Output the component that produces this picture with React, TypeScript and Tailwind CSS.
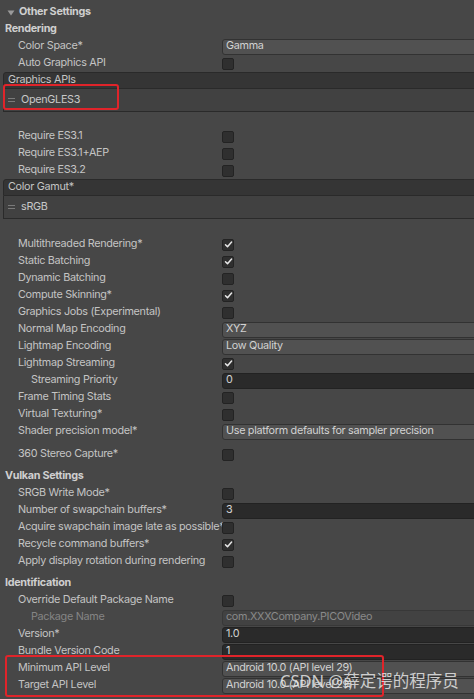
import React from "react";

const font = { fontFamily: "Inter, 'Noto Sans', sans-serif" };
const T = "text-[10.8px] tracking-[-0.3px]";

function Check({ on }: { on?: boolean }) {
  return (
    <div className="w-[12px] h-[12px] rounded-[2px] bg-[#2f2f2f] border border-[#232323] flex items-center justify-center">
      {on && (
        <svg width="9" height="9" viewBox="0 0 9 9">
          <path d="M1.5 4.8 L3.5 6.8 L7.6 2" stroke="#e8e8e8" strokeWidth="1.5" fill="none" strokeLinecap="round" strokeLinejoin="round" />
        </svg>
      )}
    </div>
  );
}

function Drop({ text }: { text: string }) {
  return (
    <div className={"h-[16px] w-[260px] bg-[#515151] border border-[#323232] rounded-[3px] pl-[3px] flex items-center text-[#d2d2d2] whitespace-nowrap overflow-hidden " + T}>
      {text}
    </div>
  );
}

function TextF({ text, disabled }: { text: string; disabled?: boolean }) {
  return (
    <div
      className={
        (disabled
          ? "h-[16px] w-[260px] bg-[#424242] border border-[#383838] rounded-[3px] pl-[3px] flex items-center text-[#8a8a8a] whitespace-nowrap overflow-hidden "
          : "h-[16px] w-[260px] bg-[#2a2a2a] border border-[#222222] rounded-[3px] pl-[3px] flex items-center text-[#d2d2d2] whitespace-nowrap overflow-hidden ") + T
      }
    >
      {text}
    </div>
  );
}

function Row({
  label,
  indent,
  dim,
  children,
  className,
}: {
  label: string;
  indent?: boolean;
  dim?: boolean;
  children?: React.ReactNode;
  className?: string;
}) {
  return (
    <div className={"h-[17px] flex items-center " + (className ?? "")}>
      <div
        className={
          "w-[222px] shrink-0 whitespace-nowrap " +
          T +
          " " +
          (indent ? "pl-[31px] " : "pl-[18px] ") +
          (dim ? "text-[#858585]" : "text-[#c4c4c4]")
        }
      >
        {label}
      </div>
      <div className="flex items-center">{children}</div>
    </div>
  );
}

function Header({ text, className }: { text: string; className?: string }) {
  return (
    <div className={"h-[17px] flex items-center pl-[5px] font-bold text-[#cfcfcf] " + T + " " + (className ?? "")}>
      {text}
    </div>
  );
}

function ListBox({ title, item }: { title: string; item: string }) {
  return (
    <div className="ml-[3px] w-[480px]">
      <div className={"h-[17px] bg-[#353535] border border-[#2a2a2a] rounded-tl-[3px] flex items-center pl-[4px] text-[#c4c4c4] " + T}>
        {title}
      </div>
      <div className={"h-[23px] bg-[#414141] border border-t-0 border-[#2a2a2a] flex items-center pl-[4px] text-[#c8c8c8] " + T}>
        <div className="flex flex-col gap-[2px] mr-[6px]">
          <div className="w-[7px] h-[1px] bg-[#7a7a7a]" />
          <div className="w-[7px] h-[1px] bg-[#7a7a7a]" />
        </div>
        {item}
      </div>
    </div>
  );
}

export default function App() {
  return (
    <div className="relative w-[474px] h-[699px] bg-[#474747] overflow-hidden" style={font}>
      <div className="flex flex-col pt-[4px]">
        <div className={"h-[17px] flex items-center pl-[7px] font-bold text-[#cfcfcf] " + T}>
          <svg width="8" height="8" viewBox="0 0 8 8" className="mr-[4px]">
            <path d="M0.5 1.5 L7.5 1.5 L4 6.5 Z" fill="#9a9a9a" />
          </svg>
          Other Settings
        </div>
        <Header text="Rendering" />
        <Row label="Color Space*">
          <Drop text="Gamma" />
        </Row>
        <Row label="Auto Graphics API">
          <Check />
        </Row>
        <ListBox title="Graphics APIs" item="OpenGLES3" />
        <div className="mt-[16px]">
          <Row label="Require ES3.1">
            <Check />
          </Row>
          <Row label="Require ES3.1+AEP">
            <Check />
          </Row>
          <Row label="Require ES3.2">
            <Check />
          </Row>
        </div>
        <div className="mt-[0px]">
          <ListBox title="Color Gamut*" item="sRGB" />
        </div>
        <div className="mt-[17px]">
          <Row label="Multithreaded Rendering*">
            <Check on />
          </Row>
          <Row label="Static Batching">
            <Check on />
          </Row>
          <Row label="Dynamic Batching">
            <Check />
          </Row>
          <Row label="Compute Skinning*">
            <Check on />
          </Row>
          <Row label="Graphics Jobs (Experimental)">
            <Check />
          </Row>
          <Row label="Normal Map Encoding">
            <Drop text="XYZ" />
          </Row>
          <Row label="Lightmap Encoding">
            <Drop text="Low Quality" />
          </Row>
          <Row label="Lightmap Streaming">
            <Check on />
          </Row>
          <Row label="Streaming Priority" indent>
            <TextF text="0" />
          </Row>
          <Row label="Frame Timing Stats">
            <Check />
          </Row>
          <Row label="Virtual Texturing*">
            <Check />
          </Row>
          <Row label="Shader precision model*">
            <Drop text="Use platform defaults for sampler precision" />
          </Row>
          <Row label="360 Stereo Capture*" className="mt-[6px]">
            <Check />
          </Row>
        </div>
        <Header text="Vulkan Settings" className="mt-[5px]" />
        <Row label="SRGB Write Mode*">
          <Check />
        </Row>
        <Row label="Number of swapchain buffers*">
          <TextF text="3" />
        </Row>
        <Row label="Acquire swapchain image late as possible*">
          <Check />
        </Row>
        <Row label="Recycle command buffers*">
          <Check on />
        </Row>
        <Row label="Apply display rotation during rendering">
          <Check />
        </Row>
        <Header text="Identification" className="mt-[5px]" />
        <Row label="Override Default Package Name">
          <Check />
        </Row>
        <Row label="Package Name" indent dim>
          <TextF text="com.XXXCompany.PICOVideo" disabled />
        </Row>
        <Row label="Version*">
          <TextF text="1.0" />
        </Row>
        <Row label="Bundle Version Code">
          <TextF text="1" />
        </Row>
        <Row label="Minimum API Level">
          <Drop text="Android 10.0 (API level 29)" />
        </Row>
        <Row label="Target API Level">
          <Drop text="Android 10.0 (API level 29)" />
        </Row>
      </div>

      {/* red annotation boxes */}
      <div className="absolute left-[3px] top-[84px] w-[116px] h-[26px] border-2 border-[#e0242a] rounded-[3px] pointer-events-none" />
      <div className="absolute left-[5px] top-[655px] w-[379px] h-[42px] border-2 border-[#e0242a] rounded-[3px] pointer-events-none" />

      {/* watermark */}
      <div
        className="absolute left-[280px] top-[673px] text-[16.5px] leading-none text-[#e6e6e6]/85 whitespace-nowrap"
        style={{ fontFamily: "'Noto Sans', 'Noto Sans CJK SC', sans-serif" }}
      >
        CSDN @薛定谔的程序员
      </div>
    </div>
  );
}
